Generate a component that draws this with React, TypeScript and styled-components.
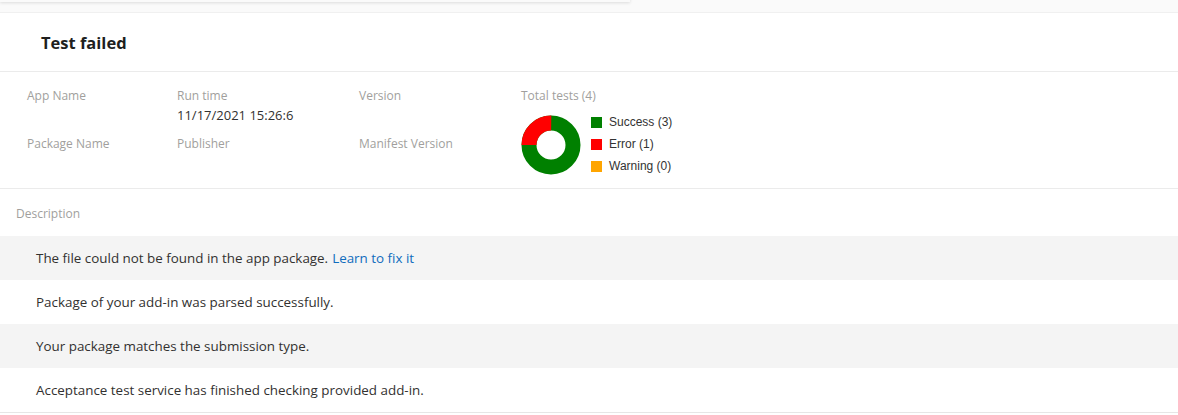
import React from 'react';
import styled, { createGlobalStyle } from 'styled-components';

const GlobalStyle = createGlobalStyle`
	html, body {
		margin: 0;
		padding: 0;
		background: #ffffff;
	}
	body {
		font-family: 'Segoe UI', 'Open Sans', 'Liberation Sans', sans-serif;
		color: #323130;
	}
`;

const TopStrip = styled.div`
	height: 12px;
	background: #fafafa;
	border-bottom: 1px solid #f0f0f0;
	position: relative;
	overflow: hidden;
`;

const TopShadow = styled.div`
	position: absolute;
	left: 0;
	top: -10px;
	width: 630px;
	height: 12px;
	background: #fafafa;
	box-shadow: 0 1px 3px rgba(0, 0, 0, 0.12);
`;

const Header = styled.div`
	height: 59px;
	display: flex;
	align-items: center;
	padding-left: 41px;
	padding-top: 1px;
	box-sizing: border-box;
	border-bottom: 1px solid #ebebeb;
`;

const Title = styled.h1`
	margin: 0;
	font-size: 16.5px;
	font-weight: 700;
	color: #201f1e;
`;

const InfoSection = styled.div`
	height: 117px;
	display: flex;
	border-bottom: 1px solid #ebebeb;
	padding-left: 27px;
	padding-top: 16px;
	box-sizing: border-box;
`;

const Column = styled.div<{ width: number }>`
	width: ${({ width }) => width}px;
	display: flex;
	flex-direction: column;
`;

const Field = styled.div`
	height: 48px;
`;

const Label = styled.div`
	font-size: 12px;
	line-height: 16px;
	color: #a19f9d;
`;

const Value = styled.div`
	font-size: 13px;
	line-height: 18px;
	color: #323130;
	margin-top: 2px;
`;

const ChartRow = styled.div`
	display: flex;
	align-items: center;
	margin-top: 11px;
	gap: 10px;
`;

const Legend = styled.ul`
	list-style: none;
	margin: 0;
	padding: 0;
	display: flex;
	flex-direction: column;
	gap: 6px;
	margin-top: -2px;
`;

const LegendItem = styled.li`
	display: flex;
	align-items: center;
	gap: 7px;
	font-family: 'Liberation Sans', Arial, sans-serif;
	font-size: 12px;
	line-height: 16px;
	color: #333333;
`;

const Swatch = styled.span<{ color: string }>`
	width: 11px;
	height: 11px;
	background: ${({ color }) => color};
	display: inline-block;
`;

const DescLabel = styled.div`
	padding: 17px 16px 0;
	height: 47px;
	box-sizing: border-box;
	font-size: 12px;
	line-height: 16px;
	color: #a19f9d;
`;

const List = styled.div`
	border-bottom: 1px solid #e6e6e6;
`;

const Row = styled.div<{ shaded: boolean }>`
	height: 44px;
	display: flex;
	align-items: center;
	padding-left: 36px;
	font-size: 13.4px;
	color: #323130;
	background: ${({ shaded }) => (shaded ? '#f4f4f4' : '#ffffff')};
`;

const Link = styled.a`
	color: #0f6cbd;
	text-decoration: none;
	margin-left: 4px;
	cursor: pointer;
`;

function Donut(): JSX.Element {
	const cx = 30;
	const cy = 30;
	const r = 22;
	const c = 2 * Math.PI * r;
	return (
		<svg width="60" height="60" viewBox="0 0 60 60">
			<circle cx={cx} cy={cy} r={r} fill="none" stroke="#008000" strokeWidth="15" />
			<circle
				cx={cx}
				cy={cy}
				r={r}
				fill="none"
				stroke="#ff0000"
				strokeWidth="15"
				strokeDasharray={`${c / 4} ${c}`}
				transform={`rotate(180 ${cx} ${cy})`}
			/>
		</svg>
	);
}

const rows = [
	'Package of your add-in was parsed successfully.',
	'Your package matches the submission type.',
	'Acceptance test service has finished checking provided add-in.',
];

export default function App(): JSX.Element {
	return (
		<>
			<GlobalStyle />
			<TopStrip>
				<TopShadow />
			</TopStrip>
			<Header>
				<Title>Test failed</Title>
			</Header>
			<InfoSection>
				<Column width={150}>
					<Field>
						<Label>App Name</Label>
					</Field>
					<Field>
						<Label>Package Name</Label>
					</Field>
				</Column>
				<Column width={182}>
					<Field>
						<Label>Run time</Label>
						<Value>11/17/2021 15:26:6</Value>
					</Field>
					<Field>
						<Label>Publisher</Label>
					</Field>
				</Column>
				<Column width={162}>
					<Field>
						<Label>Version</Label>
					</Field>
					<Field>
						<Label>Manifest Version</Label>
					</Field>
				</Column>
				<Column width={200}>
					<Label>Total tests (4)</Label>
					<ChartRow>
						<Donut />
						<Legend>
							<LegendItem>
								<Swatch color="#008000" />
								Success (3)
							</LegendItem>
							<LegendItem>
								<Swatch color="#ff0000" />
								Error (1)
							</LegendItem>
							<LegendItem>
								<Swatch color="#ffa500" />
								Warning (0)
							</LegendItem>
						</Legend>
					</ChartRow>
				</Column>
			</InfoSection>
			<DescLabel>Description</DescLabel>
			<List>
				<Row shaded>
					The file could not be found in the app package.
					<Link>Learn to fix it</Link>
				</Row>
				{rows.map((text, i) => (
					<Row key={text} shaded={i % 2 === 1}>
						{text}
					</Row>
				))}
			</List>
		</>
	);
}
